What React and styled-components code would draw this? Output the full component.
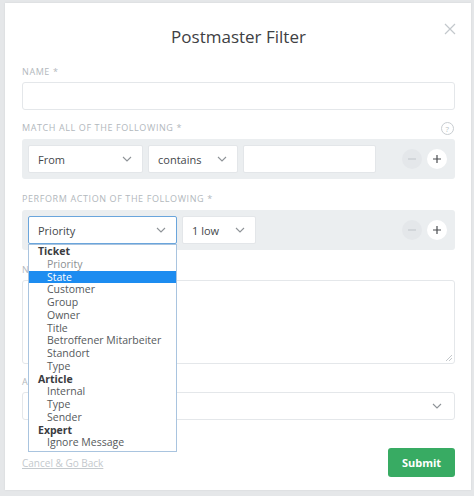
import React from "react";
import styled, { createGlobalStyle } from "styled-components";

const GlobalStyle = createGlobalStyle`
  html, body {
    margin: 0;
    padding: 0;
    background: #e5e7e9;
    font-family: "Open Sans", "Noto Sans", sans-serif;
  }
`;

const Page = styled.div`
  padding: 3px 3px 6px 5px;
`;

const Modal = styled.div`
  position: relative;
  width: 466px;
  height: 487px;
  box-sizing: border-box;
  background: #fff;
  padding: 22px 16px 13px 17px;
  box-shadow: 0 0 2px rgba(0, 0, 0, 0.08);
  display: flex;
  flex-direction: column;
`;

const Close = styled.button`
  position: absolute;
  top: 19px;
  right: 14px;
  width: 14px;
  height: 14px;
  padding: 0;
  border: 0;
  background: none;
`;

const Title = styled.h1`
  margin: 0;
  text-align: center;
  font-size: 17px;
  line-height: 24px;
  font-weight: 400;
  color: #3e4043;
`;

const Label = styled.div`
  margin-top: ${(p) => p.$top}px;
  font-size: 9px;
  line-height: 14px;
  letter-spacing: 0.6px;
  text-transform: uppercase;
  color: #b2b8bd;
  display: flex;
  justify-content: space-between;
  align-items: center;
`;

const Help = styled.span`
  width: 11px;
  height: 11px;
  border: 1px solid #c8cdd1;
  border-radius: 50%;
  font-size: 8px;
  line-height: 11px;
  text-align: center;
  color: #b9bfc4;
  margin-right: 1px;
`;

const Input = styled.div`
  margin-top: 3px;
  height: ${(p) => p.$h || 28}px;
  box-sizing: border-box;
  border: 1px solid #e4e7ea;
  border-radius: 3px;
  background: #fff;
  position: relative;
  display: flex;
  align-items: center;
  padding: 0 12px 0 14px;
  justify-content: flex-end;
  font-size: 11px;
  color: #6b6f73;
`;

const Panel = styled.div`
  margin-top: 4px;
  background: #ebeef0;
  border-radius: 3px;
  padding: 6px 8px 6px 6px;
  display: flex;
  align-items: center;
  gap: 5px;
  position: relative;
`;

const Select = styled.div`
  width: ${(p) => p.$w}px;
  height: 28px;
  box-sizing: border-box;
  background: #fff;
  border: 1px solid ${(p) => (p.$focus ? "#6aa5dc" : "#e3e6e9")};
  border-radius: 2px;
  display: flex;
  align-items: center;
  justify-content: space-between;
  padding: 0 10px 0 9px;
  font-size: 11px;
  color: #45484b;
`;

const TextBox = styled.div`
  width: 133px;
  height: 28px;
  box-sizing: border-box;
  background: #fff;
  border: 1px solid #e3e6e9;
  border-radius: 2px;
`;

const Spacer = styled.div`
  flex: 1;
`;

const Round = styled.span`
  width: 20px;
  height: 20px;
  border-radius: 50%;
  background: ${(p) => (p.$dim ? "#e4e7ea" : "#fff")};
  color: ${(p) => (p.$dim ? "#c6cbcf" : "#4a4d50")};
  display: flex;
  align-items: center;
  justify-content: center;
`;

const Buttons = styled.div`
  display: flex;
  gap: 5px;
`;

const Dropdown = styled.div`
  position: absolute;
  left: 6px;
  top: 34px;
  width: 149px;
  box-sizing: border-box;
  background: #fff;
  border: 1px solid #a9c4df;
  padding: 0 0 2px;
  z-index: 5;
`;

const Option = styled.div`
  height: 12.75px;
  line-height: 12.75px;
  font-size: 10.5px;
  padding-left: ${(p) => (p.$group ? 9 : 18)}px;
  font-weight: ${(p) => (p.$group ? 700 : 400)};
  color: ${(p) =>
    p.$active ? "#fff" : p.$group ? "#3a3c3f" : p.$dim ? "#8b8f93" : "#55595c"};
  background: ${(p) => (p.$active ? "#1d8cf0" : "transparent")};
  white-space: nowrap;
`;

const Grip = styled.svg`
  position: absolute;
  right: 2px;
  bottom: 2px;
`;

const Footer = styled.div`
  margin-top: auto;
  display: flex;
  justify-content: space-between;
  align-items: center;
`;

const CancelLink = styled.a`
  font-size: 10px;
  color: #c4c9cd;
  text-decoration: underline;
`;

const Submit = styled.button`
  width: 67px;
  height: 29px;
  border: 0;
  border-radius: 3px;
  background: #38ab63;
  color: #fff;
  font-family: inherit;
  font-size: 11px;
  font-weight: 700;
`;

const Chevron = () => (
  <svg width="10" height="6" viewBox="0 0 10 6">
    <path d="M1 1l4 4 4-4" fill="none" stroke="#8e9397" strokeWidth="1.1" />
  </svg>
);

const Minus = () => (
  <Round $dim>
    <svg width="8" height="8" viewBox="0 0 8 8">
      <path d="M0 4h8" stroke="currentColor" strokeWidth="1.2" />
    </svg>
  </Round>
);

const Plus = () => (
  <Round>
    <svg width="8" height="8" viewBox="0 0 8 8">
      <path d="M0 4h8M4 0v8" stroke="currentColor" strokeWidth="1.2" />
    </svg>
  </Round>
);

const options = [
  { t: "Ticket", g: true },
  { t: "Priority", d: true },
  { t: "State", a: true },
  { t: "Customer" },
  { t: "Group" },
  { t: "Owner" },
  { t: "Title" },
  { t: "Betroffener Mitarbeiter" },
  { t: "Standort" },
  { t: "Type" },
  { t: "Article", g: true },
  { t: "Internal" },
  { t: "Type" },
  { t: "Sender" },
  { t: "Expert", g: true },
  { t: "Ignore Message" },
];

const App = () => (
  <Page>
    <GlobalStyle />
    <Modal>
      <Close>
        <svg width="14" height="14" viewBox="0 0 14 14">
          <path d="M2 2l10 10M12 2L2 12" stroke="#c3c8cc" strokeWidth="1.2" />
        </svg>
      </Close>
      <Title>Postmaster Filter</Title>

      <Label $top={16}>Name *</Label>
      <Input />

      <Label $top={11}>
        Match all of the following *
        <Help>?</Help>
      </Label>
      <Panel>
        <Select $w={115}>
          From <Chevron />
        </Select>
        <Select $w={90}>
          contains <Chevron />
        </Select>
        <TextBox />
        <Spacer />
        <Buttons>
          <Minus />
          <Plus />
        </Buttons>
      </Panel>

      <Label $top={13}>Perform action of the following *</Label>
      <Panel>
        <Select $w={149} $focus>
          Priority <Chevron />
        </Select>
        <Select $w={74}>
          1 low <Chevron />
        </Select>
        <Spacer />
        <Buttons>
          <Minus />
          <Plus />
        </Buttons>
        <Dropdown>
          {options.map((o, i) => (
            <Option key={i} $group={o.g} $active={o.a} $dim={o.d}>
              {o.t}
            </Option>
          ))}
        </Dropdown>
      </Panel>

      <Label $top={13}>Note</Label>
      <Input $h={84}>
        <Grip width="7" height="7" viewBox="0 0 7 7">
          <path d="M1 7l6-6M4 7l3-3" stroke="#b5babe" strokeWidth="0.8" />
        </Grip>
      </Input>

      <Label $top={11}>Active *</Label>
      <Input>
        <Chevron />
      </Input>

      <Footer>
        <CancelLink>Cancel &amp; Go Back</CancelLink>
        <Submit>Submit</Submit>
      </Footer>
    </Modal>
  </Page>
);

export default App;
